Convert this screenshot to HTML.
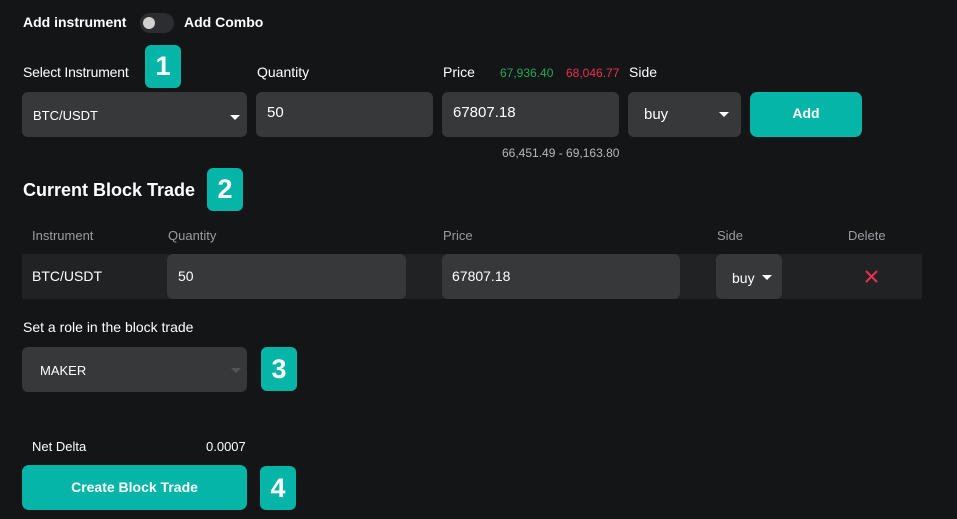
<!DOCTYPE html>
<html><head><style>
*{box-sizing:border-box;margin:0;padding:0}
body{width:957px;height:519px;background:#141517;font-family:"Liberation Sans",sans-serif;color:#fff;position:relative;overflow:hidden;font-size:14px}
.a{position:absolute;white-space:nowrap}
.b{font-weight:bold}
.inp{position:absolute;background:#37383a;border-radius:6px}
.badge{position:absolute;background:#04b5a8;border-radius:6px;color:#fff;font-weight:bold;font-size:27px;text-align:center}
.btn{position:absolute;background:#04b5a8;border-radius:7px;font-weight:bold;text-align:center}
.tri{position:absolute;width:0;height:0;border-left:5px solid transparent;border-right:5px solid transparent;border-top:5px solid #fff}
.h{color:#9a9ca0}
</style></head><body>
<div class="a b" style="left:23px;top:14px;font-size:14px">Add instrument</div>
<div class="a" style="left:140px;top:13px;width:34px;height:20px;background:#2c2d30;border-radius:10px"></div>
<div class="a" style="left:143px;top:17px;width:12px;height:12px;background:#d0d0d0;border-radius:50%"></div>
<div class="a b" style="left:184px;top:14px">Add Combo</div>

<div class="a" style="left:23px;top:64px;letter-spacing:-0.2px">Select Instrument</div>
<div class="badge" style="left:145px;top:45px;width:36px;height:43px;line-height:43px">1</div>
<div class="a" style="left:257px;top:64px">Quantity</div>
<div class="a" style="left:443px;top:64px">Price</div>
<div class="a" style="left:500px;top:66px;font-size:12px;color:#23a85a">67,936.40</div>
<div class="a" style="left:566px;top:66px;font-size:12px;color:#e8314f">68,046.77</div>
<div class="a" style="left:629px;top:64px">Side</div>

<div class="inp" style="left:22px;top:92px;width:225px;height:45px"></div>
<div class="a" style="left:33px;top:108px;font-size:13px">BTC/USDT</div>
<div class="tri" style="left:230px;top:115px"></div>
<div class="inp" style="left:256px;top:92px;width:177px;height:45px"></div>
<div class="a" style="left:267px;top:104px;font-size:15px">50</div>
<div class="inp" style="left:442px;top:92px;width:177px;height:45px"></div>
<div class="a" style="left:453px;top:104px;font-size:15px">67807.18</div>
<div class="inp" style="left:628px;top:92px;width:113px;height:45px"></div>
<div class="a" style="left:644px;top:106px;font-size:15px">buy</div>
<div class="tri" style="left:719px;top:112px"></div>
<div class="btn" style="left:750px;top:92px;width:112px;height:45px;line-height:42px">Add</div>
<div class="a" style="left:502px;top:146px;font-size:12px;color:#b5b7ba">66,451.49 - 69,163.80</div>

<div class="a b" style="left:23px;top:180px;font-size:18px">Current Block Trade</div>
<div class="badge" style="left:207px;top:168px;width:36px;height:43px;line-height:43px">2</div>

<div class="a h" style="left:32px;top:228px;font-size:13px">Instrument</div>
<div class="a h" style="left:168px;top:228px;font-size:13px">Quantity</div>
<div class="a h" style="left:443px;top:228px;font-size:13px">Price</div>
<div class="a h" style="left:717px;top:228px;font-size:13px">Side</div>
<div class="a h" style="left:848px;top:228px;font-size:13px">Delete</div>

<div class="a" style="left:22px;top:254px;width:900px;height:45px;background:#212224"></div>
<div class="a" style="left:32px;top:268px;font-size:14px">BTC/USDT</div>
<div class="inp" style="left:167px;top:254px;width:239px;height:45px"></div>
<div class="a" style="left:178px;top:268px;font-size:14px">50</div>
<div class="inp" style="left:442px;top:254px;width:238px;height:45px"></div>
<div class="a" style="left:452px;top:268px;font-size:14px">67807.18</div>
<div class="inp" style="left:716px;top:254px;width:66px;height:45px"></div>
<div class="a" style="left:732px;top:270px;font-size:14px">buy</div>
<div class="tri" style="left:762px;top:275px"></div>
<svg class="a" style="left:864px;top:269px" width="15" height="15"><path d="M2 2L13 13M13 2L2 13" stroke="#e8314f" stroke-width="2"/></svg>

<div class="a" style="left:23px;top:319px;font-size:14px">Set a role in the block trade</div>
<div class="inp" style="left:22px;top:347px;width:225px;height:45px"></div>
<div class="a" style="left:40px;top:363px;font-size:13px">MAKER</div>
<div class="tri" style="left:231px;top:368px;border-top-color:#555"></div>
<div class="badge" style="left:261px;top:347px;width:36px;height:44px;line-height:44px">3</div>

<div class="a" style="left:32px;top:439px;font-size:13px">Net Delta</div>
<div class="a" style="left:206px;top:439px;font-size:13px">0.0007</div>
<div class="btn" style="left:22px;top:465px;width:225px;height:45px;line-height:44px;font-size:14px">Create Block Trade</div>
<div class="badge" style="left:260px;top:466px;width:36px;height:44px;line-height:44px">4</div>
</body></html>
